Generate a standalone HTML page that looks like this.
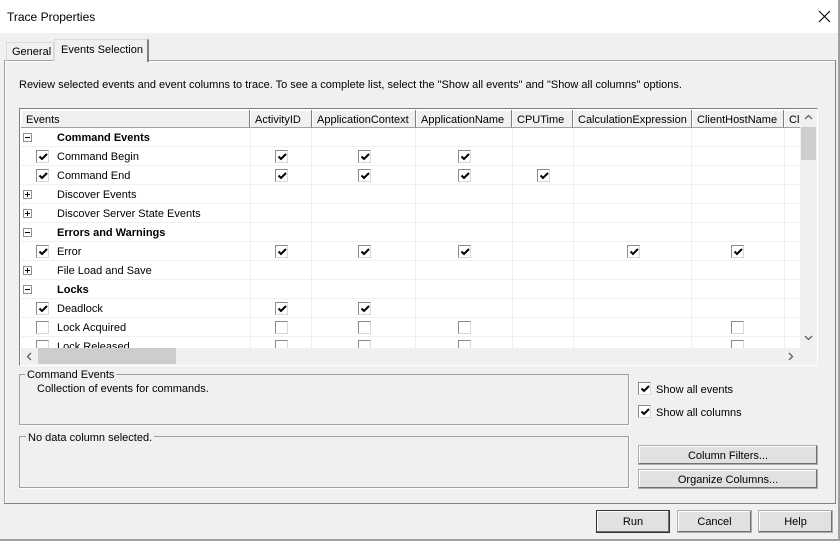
<!DOCTYPE html>
<html><head><meta charset="utf-8"><style>
*{box-sizing:border-box;margin:0;padding:0}
body{width:840px;height:541px;background:#f0f0f0;font-family:"Liberation Sans",sans-serif;font-size:11px;color:#000;position:relative;overflow:hidden}
.a{position:absolute}
.t{position:absolute;white-space:nowrap;line-height:13px;margin-top:1px}
.cb{position:absolute;width:13px;height:13px;background:#fff;border:1px solid #8a8a8a;border-right-color:#d8d8d8;border-bottom-color:#d8d8d8}
.cb svg{position:absolute;left:1px;top:1px}
.hd{position:absolute;top:110px;height:18px;border-right:1px solid #808080;border-bottom:1px solid #a0a0a0;background:#f0f0f0;padding:4px 0 0 5px;white-space:nowrap;overflow:hidden;box-shadow:inset 1px 1px 0 #fff}
.row{position:absolute;left:21px;width:779px;height:19px;border-bottom:1px solid #f0f0f0}
.vl{position:absolute;top:128px;height:220px;width:1px;background:#f0f0f0}
.ex{position:absolute;width:9px;height:9px;border:1px solid #919191;background:#fff}
.ex:before{content:"";position:absolute;left:1px;top:3px;width:5px;height:1px;background:#000}
.ex.p:after{content:"";position:absolute;left:3px;top:1px;width:1px;height:5px;background:#000}
.btn{position:absolute;background:#e1e1e1;border:1px solid #adadad;box-shadow:inset -1px -1px 0 #707070,inset 1px 1px 0 #fff;text-align:center;line-height:20px}
.grp{position:absolute;border:1px solid #a0a0a0;box-shadow:1px 1px 0 #fff}
.lg{position:absolute;background:#f0f0f0;padding:0 2px;line-height:12px;margin-top:1px}
</style></head><body>
<div class="a" style="left:0;top:0;width:840px;height:33px;background:#fff"></div>
<div class="t" style="left:7px;top:10px;font-size:12px">Trace Properties</div>
<svg class="a" style="left:818px;top:10px" width="13" height="13"><path d="M1 1L12 12M12 1L1 12" stroke="#000" stroke-width="1.1"/></svg>
<div class="a" style="left:838px;top:0;width:2px;height:541px;background:#a0a0a0"></div>
<div class="a" style="left:4px;top:60px;width:832px;height:444px;border:1px solid #a0a0a0;border-right-color:#808080;border-bottom-color:#808080;box-shadow:inset 1px 1px 0 #fff"></div>
<div class="a" style="left:6px;top:42px;width:48px;height:19px;border:1px solid #d9d9d9;border-bottom:none"></div>
<div class="t" style="left:12px;top:45px">General</div>
<div class="a" style="left:54px;top:39px;width:95px;height:23px;background:#f0f0f0;border:1px solid #d9d9d9;border-right:2px solid #808080;border-bottom:none"></div>
<div class="t" style="left:61px;top:43px">Events Selection</div>
<div class="t" style="left:19px;top:78px">Review selected events and event columns to trace. To see a complete list, select the "Show all events" and "Show all columns" options.</div>
<div class="a" style="left:19px;top:108px;width:799px;height:258px;border:1px solid #808080;border-right-color:#fff;border-bottom-color:#fff;background:#fff"></div>
<div class="hd" style="left:21px;width:229px">Events</div>
<div class="hd" style="left:250px;width:62px">ActivityID</div>
<div class="hd" style="left:312px;width:104px">ApplicationContext</div>
<div class="hd" style="left:416px;width:96px">ApplicationName</div>
<div class="hd" style="left:512px;width:61px">CPUTime</div>
<div class="hd" style="left:573px;width:119px">CalculationExpression</div>
<div class="hd" style="left:692px;width:92px">ClientHostName</div>
<div class="hd" style="left:784px;width:16px;border-right:none">Cli</div>
<div class="row" style="top:128px"></div><div class="row" style="top:147px"></div><div class="row" style="top:166px"></div><div class="row" style="top:185px"></div><div class="row" style="top:204px"></div><div class="row" style="top:223px"></div><div class="row" style="top:242px"></div><div class="row" style="top:261px"></div><div class="row" style="top:280px"></div><div class="row" style="top:299px"></div><div class="row" style="top:318px"></div>
<div class="vl" style="left:250px"></div><div class="vl" style="left:311px"></div><div class="vl" style="left:415px"></div><div class="vl" style="left:512px"></div><div class="vl" style="left:573px"></div><div class="vl" style="left:691px"></div><div class="vl" style="left:784px"></div>
<div class="ex" style="left:23px;top:133px"></div><div class="t" style="left:57px;top:131px;font-weight:bold">Command Events</div>
<div class="t" style="left:57px;top:150px">Command Begin</div>
<div class="t" style="left:57px;top:169px">Command End</div>
<div class="ex p" style="left:23px;top:190px"></div><div class="t" style="left:57px;top:188px">Discover Events</div>
<div class="ex p" style="left:23px;top:209px"></div><div class="t" style="left:57px;top:207px">Discover Server State Events</div>
<div class="ex" style="left:23px;top:228px"></div><div class="t" style="left:57px;top:226px;font-weight:bold">Errors and Warnings</div>
<div class="t" style="left:57px;top:245px">Error</div>
<div class="ex p" style="left:23px;top:266px"></div><div class="t" style="left:57px;top:264px">File Load and Save</div>
<div class="ex" style="left:23px;top:285px"></div><div class="t" style="left:57px;top:283px;font-weight:bold">Locks</div>
<div class="t" style="left:57px;top:302px">Deadlock</div>
<div class="t" style="left:57px;top:321px">Lock Acquired</div>
<div class="a" style="left:21px;top:340px;width:779px;height:8px;overflow:hidden"><div class="t" style="left:36px;top:0px">Lock Released</div>
<div class="cb" style="left:15px;top:0"></div><div class="cb" style="left:254px;top:0"></div><div class="cb" style="left:337px;top:0"></div><div class="cb" style="left:437px;top:0"></div><div class="cb" style="left:710px;top:0"></div></div>
<svg width="0" height="0" style="position:absolute"><defs><path id="ck" d="M1.5 4.5L4 7L9 2" stroke="#000" stroke-width="2" fill="none"/></defs></svg>
<div class="cb" style="left:36px;top:150px"><svg width="11" height="11"><use href="#ck"/></svg></div>
<div class="cb" style="left:275px;top:150px"><svg width="11" height="11"><use href="#ck"/></svg></div>
<div class="cb" style="left:358px;top:150px"><svg width="11" height="11"><use href="#ck"/></svg></div>
<div class="cb" style="left:458px;top:150px"><svg width="11" height="11"><use href="#ck"/></svg></div>
<div class="cb" style="left:36px;top:169px"><svg width="11" height="11"><use href="#ck"/></svg></div>
<div class="cb" style="left:275px;top:169px"><svg width="11" height="11"><use href="#ck"/></svg></div>
<div class="cb" style="left:358px;top:169px"><svg width="11" height="11"><use href="#ck"/></svg></div>
<div class="cb" style="left:458px;top:169px"><svg width="11" height="11"><use href="#ck"/></svg></div>
<div class="cb" style="left:537px;top:169px"><svg width="11" height="11"><use href="#ck"/></svg></div>
<div class="cb" style="left:36px;top:245px"><svg width="11" height="11"><use href="#ck"/></svg></div>
<div class="cb" style="left:275px;top:245px"><svg width="11" height="11"><use href="#ck"/></svg></div>
<div class="cb" style="left:358px;top:245px"><svg width="11" height="11"><use href="#ck"/></svg></div>
<div class="cb" style="left:458px;top:245px"><svg width="11" height="11"><use href="#ck"/></svg></div>
<div class="cb" style="left:627px;top:245px"><svg width="11" height="11"><use href="#ck"/></svg></div>
<div class="cb" style="left:731px;top:245px"><svg width="11" height="11"><use href="#ck"/></svg></div>
<div class="cb" style="left:36px;top:302px"><svg width="11" height="11"><use href="#ck"/></svg></div>
<div class="cb" style="left:275px;top:302px"><svg width="11" height="11"><use href="#ck"/></svg></div>
<div class="cb" style="left:358px;top:302px"><svg width="11" height="11"><use href="#ck"/></svg></div>
<div class="cb" style="left:36px;top:321px"></div><div class="cb" style="left:275px;top:321px"></div><div class="cb" style="left:358px;top:321px"></div><div class="cb" style="left:458px;top:321px"></div><div class="cb" style="left:731px;top:321px"></div>
<div class="a" style="left:800px;top:110px;width:17px;height:238px;background:#f0f0f0"></div>
<svg class="a" style="left:804px;top:114px" width="9" height="6"><path d="M1 5L4.5 1.5L8 5" stroke="#606060" stroke-width="1.3" fill="none"/></svg>
<div class="a" style="left:801px;top:127px;width:15px;height:33px;background:#cdcdcd"></div>
<svg class="a" style="left:804px;top:335px" width="9" height="6"><path d="M1 1L4.5 4.5L8 1" stroke="#606060" stroke-width="1.3" fill="none"/></svg>
<div class="a" style="left:21px;top:348px;width:796px;height:17px;background:#f0f0f0"></div>
<svg class="a" style="left:26px;top:352px" width="6" height="9"><path d="M5 1L1.5 4.5L5 8" stroke="#606060" stroke-width="1.3" fill="none"/></svg>
<div class="a" style="left:38px;top:348px;width:138px;height:16px;background:#cdcdcd"></div>
<svg class="a" style="left:788px;top:352px" width="6" height="9"><path d="M1 1L4.5 4.5L1 8" stroke="#606060" stroke-width="1.3" fill="none"/></svg>
<div class="grp" style="left:19px;top:374px;width:610px;height:51px"></div>
<div class="lg" style="left:25px;top:368px">Command Events</div>
<div class="t" style="left:37px;top:382px">Collection of events for commands.</div>
<div class="grp" style="left:19px;top:436px;width:610px;height:52px"></div>
<div class="lg" style="left:26px;top:431px">No data column selected.</div>
<div class="cb" style="left:638px;top:382px"><svg width="11" height="11"><use href="#ck"/></svg></div>
<div class="t" style="left:656px;top:383px">Show all events</div>
<div class="cb" style="left:638px;top:405px"><svg width="11" height="11"><use href="#ck"/></svg></div>
<div class="t" style="left:656px;top:406px">Show all columns</div>
<div class="btn" style="left:638px;top:445px;width:180px;height:20px">Column Filters...</div>
<div class="btn" style="left:638px;top:469px;width:180px;height:20px">Organize Columns...</div>
<div class="btn" style="left:596px;top:510px;width:74px;height:23px;line-height:22px;border-color:#333">Run</div>
<div class="btn" style="left:677px;top:510px;width:75px;height:23px;line-height:22px">Cancel</div>
<div class="btn" style="left:758px;top:510px;width:75px;height:23px;line-height:22px">Help</div>
<div class="a" style="left:0;top:539px;width:840px;height:2px;background:#a0a0a0"></div>
</body></html>
